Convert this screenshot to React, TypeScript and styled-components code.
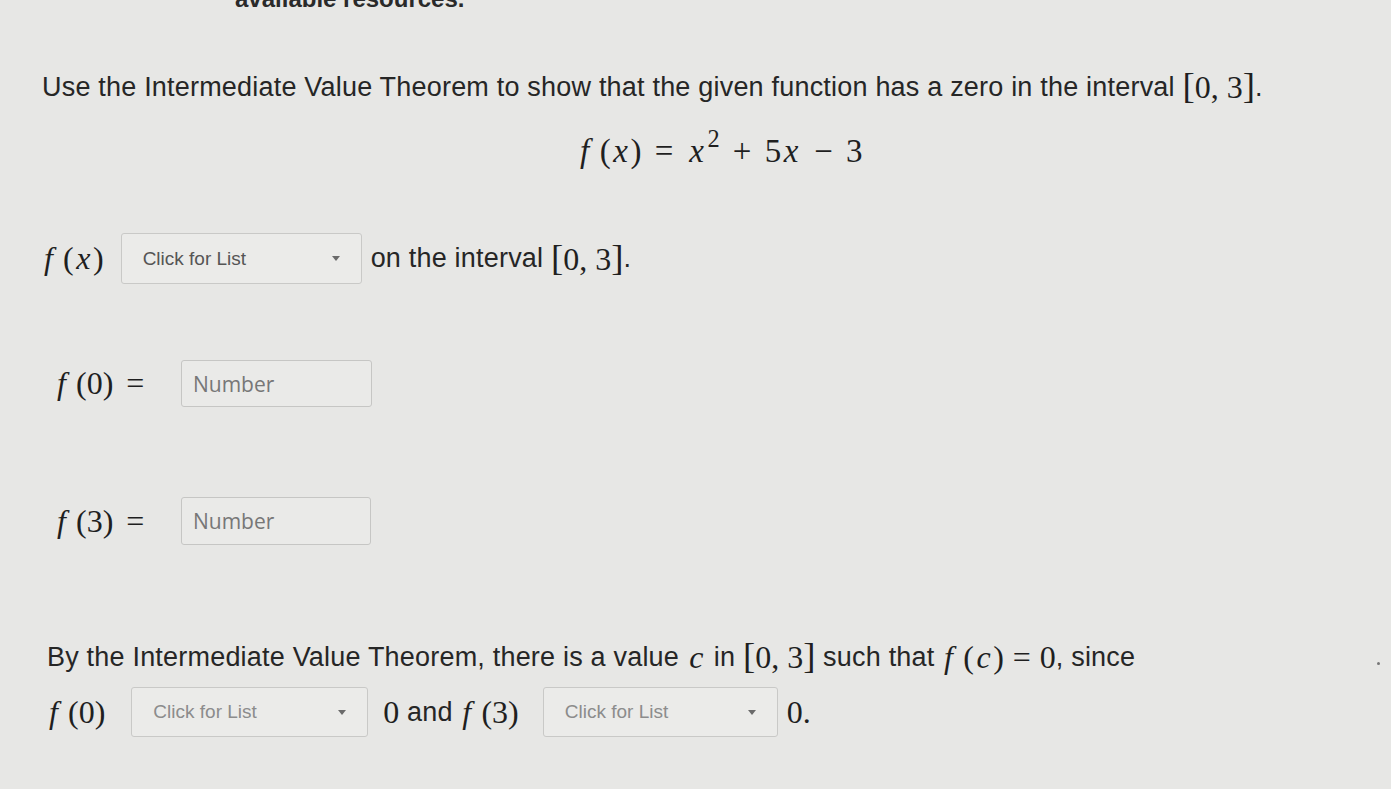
import React from "react";
import styled, { createGlobalStyle } from "styled-components";

const Global = createGlobalStyle`
  html, body { margin: 0; padding: 0; background: #e7e7e5; }
  body { width: 1391px; height: 789px; overflow: hidden; font-family: "Liberation Sans", Arial, sans-serif; color: #262626; }
`;

const Page = styled.div`
  display: flex;
  flex-direction: column;
  padding-left: 42px;
  height: 789px;
  box-sizing: border-box;
  background: #e7e7e5;
`;

const Clipped = styled.div`
  height: 11px;
  overflow: hidden;
  padding-left: 193px;
`;

const ClippedText = styled.div`
  font-size: 24px;
  font-weight: bold;
  line-height: 24px;
  margin-top: -13px;
  color: #2a2a2a;
`;

const Line = styled.div<{ $top: number; $indent?: number }>`
  display: flex;
  align-items: center;
  height: 38px;
  margin-top: ${(p) => p.$top}px;
  padding-left: ${(p) => p.$indent ?? 0}px;
  font-size: 27px;
  letter-spacing: 0.2px;
  white-space: nowrap;
`;

const FormulaLine = styled.div`
  display: flex;
  align-items: center;
  height: 42px;
  margin-top: 22px;
  padding-left: 536px;
`;

const Row = styled.div<{ $top: number; $indent?: number; $h: number }>`
  display: flex;
  align-items: center;
  height: ${(p) => p.$h}px;
  margin-top: ${(p) => p.$top}px;
  padding-left: ${(p) => p.$indent ?? 0}px;
  font-size: 27px;
  letter-spacing: 0.2px;
  white-space: nowrap;
`;

const M = styled.span<{ $size?: number }>`
  font-family: "Liberation Serif", "Times New Roman", serif;
  font-size: ${(p) => p.$size ?? 32}px;
  letter-spacing: 0;
  color: #1f1f1f;
  white-space: nowrap;
`;

const I = styled.i`
  font-style: italic;
  margin: 0 0.08em;
`;

const FI = styled.i`
  font-style: italic;
  margin-left: 0.06em;
  margin-right: 0.32em;
`;

const Op = styled.span<{ $tight?: boolean }>`
  margin: 0 ${(p) => (p.$tight ? 0.28 : 0.4)}em;
`;

const Sup = styled.sup`
  font-size: 0.74em;
  position: relative;
  top: -0.12em;
  margin-left: 0.04em;
`;

const Bracket = styled.span`
  font-size: 1.15em;
  line-height: 1;
`;

const Select = styled.div<{ $w: number; $h: number; $faint?: boolean }>`
  display: flex;
  align-items: center;
  justify-content: space-between;
  box-sizing: border-box;
  width: ${(p) => p.$w}px;
  height: ${(p) => p.$h}px;
  padding: 0 21px 0 21px;
  border: 1px solid #c9c9c7;
  border-radius: 3px;
  background: #ebebe9;
  font-family: "Liberation Sans", Arial, sans-serif;
  font-size: 19px;
  letter-spacing: 0;
  color: ${(p) => (p.$faint ? "#8c8c8c" : "#555")};
`;

const Caret = styled.span`
  width: 0;
  height: 0;
  border-left: 4px solid transparent;
  border-right: 4px solid transparent;
  border-top: 5px solid #6a6a6a;
`;

const Input = styled.div<{ $w: number; $h: number }>`
  display: flex;
  align-items: center;
  box-sizing: border-box;
  width: ${(p) => p.$w}px;
  height: ${(p) => p.$h}px;
  padding-left: 11px;
  border: 1px solid #c6c6c4;
  border-radius: 3px;
  background: #eaeae8;
  font-family: "Open Sans", "Liberation Sans", sans-serif;
  font-size: 21px;
  letter-spacing: 0;
  color: #777;
`;

const Gap = styled.span<{ $w: number }>`
  display: inline-block;
  width: ${(p) => p.$w}px;
  flex: none;
`;

const Dot = styled.span`
  position: absolute;
  left: 1377px;
  top: 662px;
  width: 3px;
  height: 3px;
  border-radius: 50%;
  background: #777;
`;

const Interval = () => (
  <M>
    <Bracket>[</Bracket>0, 3<Bracket>]</Bracket>
  </M>
);

export default function App() {
  return (
    <>
      <Global />
      <Page>
        <Clipped>
          <ClippedText>available resources.</ClippedText>
        </Clipped>
        <Line $top={57}>
          Use the Intermediate Value Theorem to show that the given function has a zero in the interval&nbsp;
          <Interval />.
        </Line>
        <FormulaLine>
          <M $size={33}>
            <FI>f</FI>(<I>x</I>)<Op>=</Op><I>x</I>
            <Sup>2</Sup>
            <Op>+</Op>5<I>x</I>
            <Op>−</Op>3
          </M>
        </FormulaLine>
        <Row $top={63} $h={51}>
          <M>
            <FI>f</FI>(<I>x</I>)
          </M>
          <Gap $w={17} />
          <Select $w={241} $h={51}>
            Click for List
            <Caret />
          </Select>
          <Gap $w={9} />
          on the interval&nbsp;
          <Interval />.
        </Row>
        <Row $top={76} $indent={13} $h={47}>
          <M>
            <FI>f</FI>(0)<Op>=</Op>
          </M>
          <Gap $w={24} />
          <Input $w={191} $h={47}>Number</Input>
        </Row>
        <Row $top={90} $indent={13} $h={48}>
          <M>
            <FI>f</FI>(3)<Op>=</Op>
          </M>
          <Gap $w={24} />
          <Input $w={190} $h={48}>Number</Input>
        </Row>
        <Line $top={93} $indent={5}>
          By the Intermediate Value Theorem, there is a value&nbsp;
          <M>
            <I>c</I>
          </M>
          &nbsp;in&nbsp;
          <Interval />
          &nbsp;such that&nbsp;
          <M>
            <FI>f</FI>(<I>c</I>)<Op $tight>=</Op>0
          </M>
          , since
        </Line>
        <Row $top={11} $indent={5} $h={50}>
          <M>
            <FI>f</FI>(0)
          </M>
          <Gap $w={26} />
          <Select $w={237} $h={50} $faint>
            Click for List
            <Caret />
          </Select>
          <Gap $w={15} />
          <M>0</M>
          &nbsp;and&nbsp;
          <M>
            <FI>f</FI>(3)
          </M>
          <Gap $w={24} />
          <Select $w={235} $h={50} $faint>
            Click for List
            <Caret />
          </Select>
          <Gap $w={9} />
          <M>0.</M>
        </Row>
        <Dot />
      </Page>
    </>
  );
}
